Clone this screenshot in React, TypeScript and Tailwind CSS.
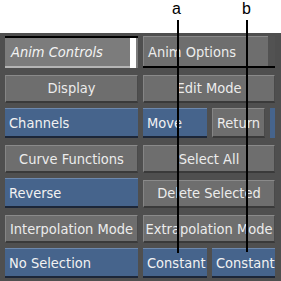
import React from "react";

const font = { fontFamily: '"DejaVu Sans Condensed", "DejaVu Sans", "Liberation Sans", sans-serif' };

function Gray({ children, className = "" }: { children: React.ReactNode; className?: string }) {
  return (
    <div
      className={
        "flex items-center justify-center pt-[2px] whitespace-nowrap bg-[#6e6e6e] border-t border-l border-t-[#8a8a8a] border-l-[#858585] border-b-2 border-b-[#3a3a3a] border-r border-r-[#4a4a4a] text-[#ececec] text-[14.5px] " +
        className
      }
    >
      {children}
    </div>
  );
}

function Blue({ children, className = "" }: { children: React.ReactNode; className?: string }) {
  return (
    <div
      className={
        "h-[30px] flex items-center pl-[4px] pt-[2px] whitespace-nowrap bg-[#46648c] border-t border-t-[#6d88ad] border-b-2 border-b-[#1c2638] text-[#f2f2f2] text-[14.5px] " +
        className
      }
    >
      {children}
    </div>
  );
}

function Wide({ children }: { children: React.ReactNode }) {
  return <Gray className="h-[28px] mt-[1.5px]">{children}</Gray>;
}

export default function App() {
  return (
    <div className="relative w-[281px] h-[281px] bg-white overflow-hidden" style={font}>
      <div className="h-[33px]" />
      <div className="h-[248px] bg-[#4f4f4f] pl-[5px] pr-[6px] pt-[3px] grid grid-cols-[133px_132px] gap-x-[5px] gap-y-[5.3px] content-start">
        <div className="h-[32px] flex border-t-2 border-t-black">
          <div className="flex-1 flex items-center pl-[6px] pt-[2px] bg-[#7c7c7c] border-b-2 border-b-[#b5b5b5] text-[#f4f4f4] italic text-[14.5px]">
            Anim Controls
          </div>
          <div className="w-[6px] bg-white" />
          <div className="w-[2px] bg-[#7c7c7c]" />
        </div>
        <div className="h-[32px] flex border-b-2 border-b-black">
          <div className="flex-1 flex items-center pl-[4px] pt-[2px] bg-[#6e6e6e] border-t border-t-[#8a8a8a] border-l border-l-[#858585] text-[#ececec] text-[14.5px]">
            Anim Options
          </div>
          <div className="w-[7px] bg-[#525252]" />
        </div>

        <Wide>Display</Wide>
        <Wide>Edit Mode</Wide>

        <Blue>Channels</Blue>
        <div className="flex gap-[5px]">
          <Blue className="w-[64px]">Move</Blue>
          <Gray className="h-[30px] flex-1">Return</Gray>
          <div className="w-[5px] h-[30px] bg-[#46648c]" />
        </div>

        <Wide>Curve Functions</Wide>
        <Wide>Select All</Wide>

        <Blue>Reverse</Blue>
        <Wide>Delete Selected</Wide>

        <Wide>Interpolation Mode</Wide>
        <Wide>Extrapolation Mode</Wide>

        <Blue>No Selection</Blue>
        <div className="flex gap-[5px]">
          <Blue className="w-[64px]">Constant</Blue>
          <Blue className="flex-1">Constant</Blue>
        </div>
      </div>

      <div className="absolute left-[172px] top-[1px] text-[16px] text-black leading-none" style={{ fontFamily: '"Liberation Sans", sans-serif' }}>a</div>
      <div className="absolute left-[242px] top-[1px] text-[16px] text-black leading-none" style={{ fontFamily: '"Liberation Sans", sans-serif' }}>b</div>
      <div className="absolute left-[177px] top-[20px] w-[1.5px] h-[233px] bg-black" />
      <div className="absolute left-[246px] top-[20px] w-[1.5px] h-[232px] bg-black" />
    </div>
  );
}
